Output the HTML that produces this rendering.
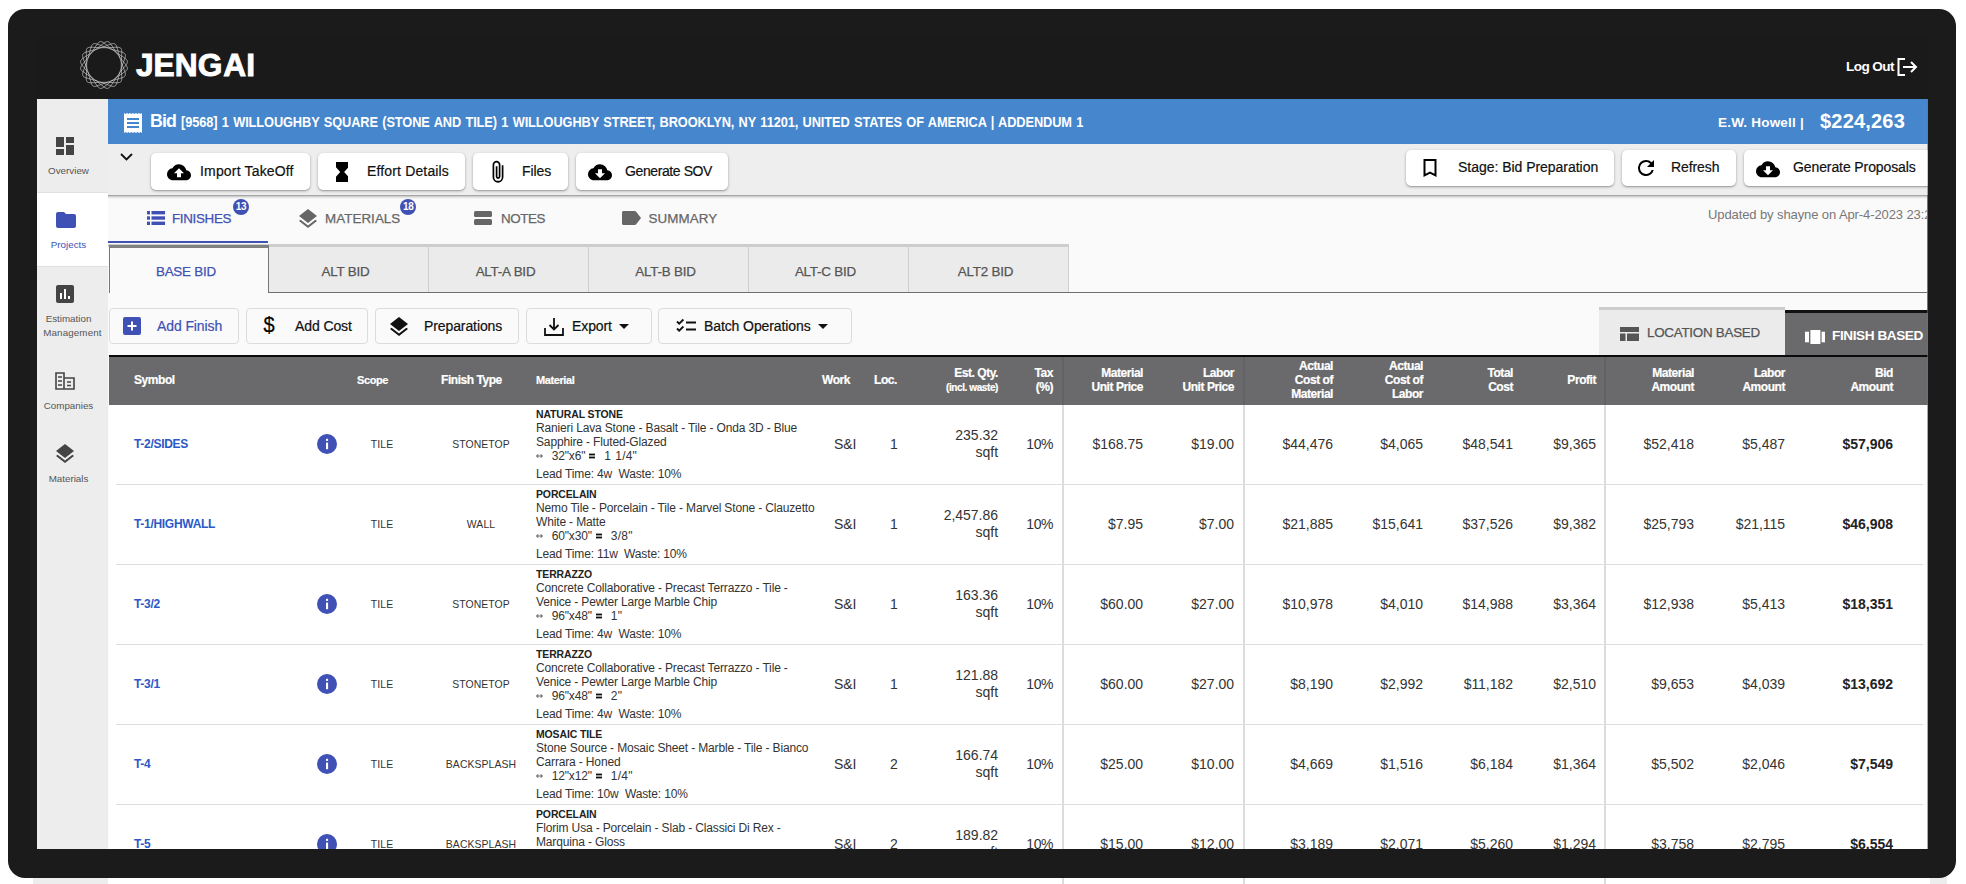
<!DOCTYPE html>
<html lang="en">
<head>
<meta charset="utf-8">
<title>JENGAI - Bid</title>
<style>
*{box-sizing:border-box;margin:0;padding:0}
html,body{width:1966px;height:884px;overflow:hidden;background:#fff}
body{position:relative;font-family:"Liberation Sans",sans-serif;color:#222}
.abs{position:absolute}
.t{position:absolute;white-space:nowrap;height:20px;line-height:20px;font-size:12px}
#frame{position:absolute;left:8px;top:9px;width:1948px;height:869px;border-radius:17px;background:#1b1b1b}
#app{position:absolute;left:0;top:0;width:1966px;height:884px;clip-path:inset(99px 38.600px 35px 37px)}
#side{position:absolute;left:37px;top:99px;width:71px;height:760px;background:#ededed}
#main{position:absolute;left:108px;top:99px;width:1830px;height:760px;background:#fafafa}
#blue{position:absolute;left:108px;top:99px;width:1830px;height:45px;background:#4686cd}
#tool{position:absolute;left:108px;top:144px;width:1830px;height:51px;background:#eeeeee}
#toolsh{position:absolute;left:108px;top:194.5px;width:1830px;height:4px;background:linear-gradient(rgba(0,0,0,.42),rgba(0,0,0,.12) 45%,rgba(0,0,0,0))}
.btn{position:absolute;background:#fff;border-radius:5px;box-shadow:0 1px 3px rgba(0,0,0,.3),0 1px 1px rgba(0,0,0,.12)}
.btn .t, .obtn .t{font-size:14px;color:#111;letter-spacing:-.1px;-webkit-text-stroke:.2px}
.obtn{position:absolute;border:1px solid #dcdcdc;border-radius:4px;background:#fafafa}
.sub{position:absolute;top:247px;height:45px;width:160px;background:#ebebeb;border-left:1px solid #cfcfcf}
.sub .t{-webkit-text-stroke:.25px;left:-3.500px;width:160px;text-align:center;top:14.700px;font-size:13.4px;color:#555;letter-spacing:-.2px}
.h{color:#fff;font-weight:bold;font-size:12px;letter-spacing:-.45px;-webkit-text-stroke:.2px #fff}
.h10{font-size:10px;letter-spacing:-.4px}
.hs{font-size:11px;letter-spacing:-.4px}
.sym{color:#2b59c8;font-weight:bold;font-size:12px;letter-spacing:-.3px}
.c12{font-size:11.5px;color:#333;letter-spacing:.1px;transform:scaleX(.905)}
.mat{font-weight:bold;font-size:11px;color:#222;letter-spacing:-.1px;transform:scaleX(.948);transform-origin:0 50%}
.d12{font-size:12px;color:#333;letter-spacing:-.15px}
.n14{font-size:14px;color:#333;letter-spacing:-.03px}
.b{font-weight:bold;color:#222}
.arr{display:inline-block;vertical-align:1px;margin-right:8.700px}
.eq{display:inline-block;vertical-align:1.500px;margin:0 9px 0 4px}
.rowline{position:absolute;left:116px;width:1807px;height:1px;background:#dedede}
.vline{position:absolute;top:405px;width:2px;height:480px;background:#dcdcdc}
.tab{color:#666;font-size:13.4px;letter-spacing:.05px;-webkit-text-stroke:.25px}
.badge{position:absolute;width:16.400px;height:16.400px;border-radius:50%;background:#3f51b5;color:#fff;font-size:10px;font-weight:bold;line-height:16.400px;text-align:center;letter-spacing:-.3px}
.sl{position:absolute;left:33px;width:71px;text-align:center;font-size:9.8px;color:#555;line-height:14px;letter-spacing:0}
</style>
</head>
<body>
<!-- bits that peek out below the frame -->
<div class="abs" style="left:33px;top:870px;width:75px;height:14px;background:#ededed"></div>
<div class="abs" style="left:1930px;top:870px;width:17px;height:14px;background:#ededed"></div>
<div class="vline" style="left:1062px"></div>
<div class="vline" style="left:1243px"></div>
<div class="vline" style="left:1604px;width:2px"></div>

<div id="frame"></div>
<div class="abs" style="left:37px;top:38px;width:1890.500px;height:61px;background:#1a1a1a"></div>

<!-- top app header -->
<svg class="abs" style="left:78px;top:38.5px" width="52" height="52" viewBox="-26 -26 52 52"><g fill="none" stroke="#e9e9e9" stroke-width="0.62"><polyline points="3.7,-23.4 4.0,-23.3 4.4,-23.2 4.7,-23.0 5.0,-22.8 5.3,-22.5 5.7,-22.2 6.0,-21.9 6.3,-21.5 6.7,-21.0 7.0,-20.5 7.4,-20.0 7.8,-19.4 8.2,-18.9 8.6,-18.2 9.0,-17.6 9.4,-16.9 9.9,-16.2 10.4,-15.5 10.8,-14.7 11.3,-14.0 11.8,-13.2 12.4,-12.5 12.9,-11.7 13.4,-10.9 14.0,-10.2 14.6,-9.4 15.1,-8.7 15.7,-7.9 16.2,-7.2 16.8,-6.5 17.4,-5.8 17.9,-5.1 18.5,-4.4 19.0,-3.8 19.5,-3.1 20.0,-2.5 20.5,-2.0 20.9,-1.4 21.3,-0.9 21.7,-0.4 22.1,0.1 22.4,0.6 22.7,1.0 22.9,1.5 23.1,1.9 23.2,2.3 23.4,2.6 23.4,3.0 23.4,3.4 23.4,3.7 23.3,4.0 23.2,4.4 23.0,4.7 22.8,5.0 22.5,5.3 22.2,5.7 21.9,6.0 21.5,6.3 21.0,6.7 20.5,7.0 20.0,7.4 19.4,7.8 18.9,8.2 18.2,8.6 17.6,9.0 16.9,9.4 16.2,9.9 15.5,10.4 14.7,10.8 14.0,11.3 13.2,11.8 12.5,12.4 11.7,12.9 10.9,13.4 10.2,14.0 9.4,14.6 8.7,15.1 7.9,15.7 7.2,16.2 6.5,16.8 5.8,17.4 5.1,17.9 4.4,18.5 3.8,19.0 3.1,19.5 2.5,20.0 2.0,20.5 1.4,20.9 0.9,21.3 0.4,21.7 -0.1,22.1 -0.6,22.4 -1.0,22.7 -1.5,22.9 -1.9,23.1 -2.3,23.2 -2.6,23.4 -3.0,23.4 -3.4,23.4 -3.7,23.4 -4.0,23.3 -4.4,23.2 -4.7,23.0 -5.0,22.8 -5.3,22.5 -5.7,22.2 -6.0,21.9 -6.3,21.5 -6.7,21.0 -7.0,20.5 -7.4,20.0 -7.8,19.4 -8.2,18.9 -8.6,18.2 -9.0,17.6 -9.4,16.9 -9.9,16.2 -10.4,15.5 -10.8,14.7 -11.3,14.0 -11.8,13.2 -12.4,12.5 -12.9,11.7 -13.4,10.9 -14.0,10.2 -14.6,9.4 -15.1,8.7 -15.7,7.9 -16.2,7.2 -16.8,6.5 -17.4,5.8 -17.9,5.1 -18.5,4.4 -19.0,3.8 -19.5,3.1 -20.0,2.5 -20.5,2.0 -20.9,1.4 -21.3,0.9 -21.7,0.4 -22.1,-0.1 -22.4,-0.6 -22.7,-1.0 -22.9,-1.5 -23.1,-1.9 -23.2,-2.3 -23.4,-2.6 -23.4,-3.0 -23.4,-3.4 -23.4,-3.7 -23.3,-4.0 -23.2,-4.4 -23.0,-4.7 -22.8,-5.0 -22.5,-5.3 -22.2,-5.7 -21.9,-6.0 -21.5,-6.3 -21.0,-6.7 -20.5,-7.0 -20.0,-7.4 -19.4,-7.8 -18.9,-8.2 -18.2,-8.6 -17.6,-9.0 -16.9,-9.4 -16.2,-9.9 -15.5,-10.4 -14.7,-10.8 -14.0,-11.3 -13.2,-11.8 -12.5,-12.4 -11.7,-12.9 -10.9,-13.4 -10.2,-14.0 -9.4,-14.6 -8.7,-15.1 -7.9,-15.7 -7.2,-16.2 -6.5,-16.8 -5.8,-17.4 -5.1,-17.9 -4.4,-18.5 -3.8,-19.0 -3.1,-19.5 -2.5,-20.0 -2.0,-20.5 -1.4,-20.9 -0.9,-21.3 -0.4,-21.7 0.1,-22.1 0.6,-22.4 1.0,-22.7 1.5,-22.9 1.9,-23.1 2.3,-23.2 2.6,-23.4 3.0,-23.4 3.4,-23.4 3.7,-23.4"/><polyline points="10.8,-21.1 11.1,-20.9 11.3,-20.7 11.6,-20.5 11.8,-20.1 12.0,-19.8 12.3,-19.4 12.5,-18.9 12.7,-18.5 12.9,-17.9 13.0,-17.3 13.2,-16.7 13.4,-16.1 13.6,-15.4 13.8,-14.7 14.0,-13.9 14.2,-13.2 14.4,-12.3 14.6,-11.5 14.9,-10.7 15.1,-9.8 15.4,-8.9 15.6,-8.0 15.9,-7.1 16.2,-6.2 16.5,-5.3 16.7,-4.4 17.1,-3.6 17.4,-2.7 17.7,-1.8 18.0,-0.9 18.3,-0.1 18.6,0.7 18.9,1.5 19.2,2.3 19.5,3.0 19.8,3.8 20.1,4.5 20.3,5.1 20.5,5.8 20.7,6.4 20.9,6.9 21.1,7.5 21.2,8.0 21.3,8.5 21.4,8.9 21.4,9.3 21.4,9.7 21.3,10.1 21.3,10.4 21.1,10.8 20.9,11.1 20.7,11.3 20.5,11.6 20.1,11.8 19.8,12.0 19.4,12.3 18.9,12.5 18.5,12.7 17.9,12.9 17.3,13.0 16.7,13.2 16.1,13.4 15.4,13.6 14.7,13.8 13.9,14.0 13.2,14.2 12.3,14.4 11.5,14.6 10.7,14.9 9.8,15.1 8.9,15.4 8.0,15.6 7.1,15.9 6.2,16.2 5.3,16.5 4.4,16.7 3.6,17.1 2.7,17.4 1.8,17.7 0.9,18.0 0.1,18.3 -0.7,18.6 -1.5,18.9 -2.3,19.2 -3.0,19.5 -3.8,19.8 -4.5,20.1 -5.1,20.3 -5.8,20.5 -6.4,20.7 -6.9,20.9 -7.5,21.1 -8.0,21.2 -8.5,21.3 -8.9,21.4 -9.3,21.4 -9.7,21.4 -10.1,21.3 -10.4,21.3 -10.8,21.1 -11.1,20.9 -11.3,20.7 -11.6,20.5 -11.8,20.1 -12.0,19.8 -12.3,19.4 -12.5,18.9 -12.7,18.5 -12.9,17.9 -13.0,17.3 -13.2,16.7 -13.4,16.1 -13.6,15.4 -13.8,14.7 -14.0,13.9 -14.2,13.2 -14.4,12.3 -14.6,11.5 -14.9,10.7 -15.1,9.8 -15.4,8.9 -15.6,8.0 -15.9,7.1 -16.2,6.2 -16.5,5.3 -16.7,4.4 -17.1,3.6 -17.4,2.7 -17.7,1.8 -18.0,0.9 -18.3,0.1 -18.6,-0.7 -18.9,-1.5 -19.2,-2.3 -19.5,-3.0 -19.8,-3.8 -20.1,-4.5 -20.3,-5.1 -20.5,-5.8 -20.7,-6.4 -20.9,-6.9 -21.1,-7.5 -21.2,-8.0 -21.3,-8.5 -21.4,-8.9 -21.4,-9.3 -21.4,-9.7 -21.3,-10.1 -21.3,-10.4 -21.1,-10.8 -20.9,-11.1 -20.7,-11.3 -20.5,-11.6 -20.1,-11.8 -19.8,-12.0 -19.4,-12.3 -18.9,-12.5 -18.5,-12.7 -17.9,-12.9 -17.3,-13.0 -16.7,-13.2 -16.1,-13.4 -15.4,-13.6 -14.7,-13.8 -13.9,-14.0 -13.2,-14.2 -12.3,-14.4 -11.5,-14.6 -10.7,-14.9 -9.8,-15.1 -8.9,-15.4 -8.0,-15.6 -7.1,-15.9 -6.2,-16.2 -5.3,-16.5 -4.4,-16.7 -3.6,-17.1 -2.7,-17.4 -1.8,-17.7 -0.9,-18.0 -0.1,-18.3 0.7,-18.6 1.5,-18.9 2.3,-19.2 3.0,-19.5 3.8,-19.8 4.5,-20.1 5.1,-20.3 5.8,-20.5 6.4,-20.7 6.9,-20.9 7.5,-21.1 8.0,-21.2 8.5,-21.3 8.9,-21.4 9.3,-21.4 9.7,-21.4 10.1,-21.3 10.4,-21.3 10.8,-21.1"/><polyline points="16.8,-16.8 17.0,-16.5 17.2,-16.2 17.3,-15.9 17.5,-15.5 17.6,-15.1 17.7,-14.6 17.7,-14.2 17.7,-13.6 17.8,-13.1 17.8,-12.5 17.8,-11.8 17.7,-11.2 17.7,-10.4 17.7,-9.7 17.6,-8.9 17.6,-8.1 17.5,-7.3 17.5,-6.4 17.4,-5.6 17.4,-4.7 17.4,-3.7 17.3,-2.8 17.3,-1.9 17.3,-0.9 17.3,-0.0 17.3,0.9 17.3,1.9 17.3,2.8 17.4,3.7 17.4,4.7 17.4,5.6 17.5,6.4 17.5,7.3 17.6,8.1 17.6,8.9 17.7,9.7 17.7,10.4 17.7,11.2 17.8,11.8 17.8,12.5 17.8,13.1 17.7,13.6 17.7,14.2 17.7,14.6 17.6,15.1 17.5,15.5 17.3,15.9 17.2,16.2 17.0,16.5 16.8,16.8 16.5,17.0 16.2,17.2 15.9,17.3 15.5,17.5 15.1,17.6 14.6,17.7 14.2,17.7 13.6,17.7 13.1,17.8 12.5,17.8 11.8,17.8 11.2,17.7 10.4,17.7 9.7,17.7 8.9,17.6 8.1,17.6 7.3,17.5 6.4,17.5 5.6,17.4 4.7,17.4 3.7,17.4 2.8,17.3 1.9,17.3 0.9,17.3 0.0,17.3 -0.9,17.3 -1.9,17.3 -2.8,17.3 -3.7,17.4 -4.7,17.4 -5.6,17.4 -6.4,17.5 -7.3,17.5 -8.1,17.6 -8.9,17.6 -9.7,17.7 -10.4,17.7 -11.2,17.7 -11.8,17.8 -12.5,17.8 -13.1,17.8 -13.6,17.7 -14.2,17.7 -14.6,17.7 -15.1,17.6 -15.5,17.5 -15.9,17.3 -16.2,17.2 -16.5,17.0 -16.8,16.8 -17.0,16.5 -17.2,16.2 -17.3,15.9 -17.5,15.5 -17.6,15.1 -17.7,14.6 -17.7,14.2 -17.7,13.6 -17.8,13.1 -17.8,12.5 -17.8,11.8 -17.7,11.2 -17.7,10.4 -17.7,9.7 -17.6,8.9 -17.6,8.1 -17.5,7.3 -17.5,6.4 -17.4,5.6 -17.4,4.7 -17.4,3.7 -17.3,2.8 -17.3,1.9 -17.3,0.9 -17.3,0.0 -17.3,-0.9 -17.3,-1.9 -17.3,-2.8 -17.4,-3.7 -17.4,-4.7 -17.4,-5.6 -17.5,-6.4 -17.5,-7.3 -17.6,-8.1 -17.6,-8.9 -17.7,-9.7 -17.7,-10.4 -17.7,-11.2 -17.8,-11.8 -17.8,-12.5 -17.8,-13.1 -17.7,-13.6 -17.7,-14.2 -17.7,-14.6 -17.6,-15.1 -17.5,-15.5 -17.3,-15.9 -17.2,-16.2 -17.0,-16.5 -16.8,-16.8 -16.5,-17.0 -16.2,-17.2 -15.9,-17.3 -15.5,-17.5 -15.1,-17.6 -14.6,-17.7 -14.2,-17.7 -13.6,-17.7 -13.1,-17.8 -12.5,-17.8 -11.8,-17.8 -11.2,-17.7 -10.4,-17.7 -9.7,-17.7 -8.9,-17.6 -8.1,-17.6 -7.3,-17.5 -6.4,-17.5 -5.6,-17.4 -4.7,-17.4 -3.7,-17.4 -2.8,-17.3 -1.9,-17.3 -0.9,-17.3 -0.0,-17.3 0.9,-17.3 1.9,-17.3 2.8,-17.3 3.7,-17.4 4.7,-17.4 5.6,-17.4 6.4,-17.5 7.3,-17.5 8.1,-17.6 8.9,-17.6 9.7,-17.7 10.4,-17.7 11.2,-17.7 11.8,-17.8 12.5,-17.8 13.1,-17.8 13.6,-17.7 14.2,-17.7 14.6,-17.7 15.1,-17.6 15.5,-17.5 15.9,-17.3 16.2,-17.2 16.5,-17.0 16.8,-16.8"/><polyline points="21.1,-10.8 21.3,-10.4 21.3,-10.1 21.4,-9.7 21.4,-9.3 21.4,-8.9 21.3,-8.5 21.2,-8.0 21.1,-7.5 20.9,-6.9 20.7,-6.4 20.5,-5.8 20.3,-5.1 20.1,-4.5 19.8,-3.8 19.5,-3.0 19.2,-2.3 18.9,-1.5 18.6,-0.7 18.3,0.1 18.0,0.9 17.7,1.8 17.4,2.7 17.1,3.6 16.7,4.4 16.5,5.3 16.2,6.2 15.9,7.1 15.6,8.0 15.4,8.9 15.1,9.8 14.9,10.7 14.6,11.5 14.4,12.3 14.2,13.2 14.0,13.9 13.8,14.7 13.6,15.4 13.4,16.1 13.2,16.7 13.0,17.3 12.9,17.9 12.7,18.5 12.5,18.9 12.3,19.4 12.0,19.8 11.8,20.1 11.6,20.5 11.3,20.7 11.1,20.9 10.8,21.1 10.4,21.3 10.1,21.3 9.7,21.4 9.3,21.4 8.9,21.4 8.5,21.3 8.0,21.2 7.5,21.1 6.9,20.9 6.4,20.7 5.8,20.5 5.1,20.3 4.5,20.1 3.8,19.8 3.0,19.5 2.3,19.2 1.5,18.9 0.7,18.6 -0.1,18.3 -0.9,18.0 -1.8,17.7 -2.7,17.4 -3.6,17.1 -4.4,16.7 -5.3,16.5 -6.2,16.2 -7.1,15.9 -8.0,15.6 -8.9,15.4 -9.8,15.1 -10.7,14.9 -11.5,14.6 -12.3,14.4 -13.2,14.2 -13.9,14.0 -14.7,13.8 -15.4,13.6 -16.1,13.4 -16.7,13.2 -17.3,13.0 -17.9,12.9 -18.5,12.7 -18.9,12.5 -19.4,12.3 -19.8,12.0 -20.1,11.8 -20.5,11.6 -20.7,11.3 -20.9,11.1 -21.1,10.8 -21.3,10.4 -21.3,10.1 -21.4,9.7 -21.4,9.3 -21.4,8.9 -21.3,8.5 -21.2,8.0 -21.1,7.5 -20.9,6.9 -20.7,6.4 -20.5,5.8 -20.3,5.1 -20.1,4.5 -19.8,3.8 -19.5,3.0 -19.2,2.3 -18.9,1.5 -18.6,0.7 -18.3,-0.1 -18.0,-0.9 -17.7,-1.8 -17.4,-2.7 -17.1,-3.6 -16.7,-4.4 -16.5,-5.3 -16.2,-6.2 -15.9,-7.1 -15.6,-8.0 -15.4,-8.9 -15.1,-9.8 -14.9,-10.7 -14.6,-11.5 -14.4,-12.3 -14.2,-13.2 -14.0,-13.9 -13.8,-14.7 -13.6,-15.4 -13.4,-16.1 -13.2,-16.7 -13.0,-17.3 -12.9,-17.9 -12.7,-18.5 -12.5,-18.9 -12.3,-19.4 -12.0,-19.8 -11.8,-20.1 -11.6,-20.5 -11.3,-20.7 -11.1,-20.9 -10.8,-21.1 -10.4,-21.3 -10.1,-21.3 -9.7,-21.4 -9.3,-21.4 -8.9,-21.4 -8.5,-21.3 -8.0,-21.2 -7.5,-21.1 -6.9,-20.9 -6.4,-20.7 -5.8,-20.5 -5.1,-20.3 -4.5,-20.1 -3.8,-19.8 -3.0,-19.5 -2.3,-19.2 -1.5,-18.9 -0.7,-18.6 0.1,-18.3 0.9,-18.0 1.8,-17.7 2.7,-17.4 3.6,-17.1 4.4,-16.7 5.3,-16.5 6.2,-16.2 7.1,-15.9 8.0,-15.6 8.9,-15.4 9.8,-15.1 10.7,-14.9 11.5,-14.6 12.3,-14.4 13.2,-14.2 13.9,-14.0 14.7,-13.8 15.4,-13.6 16.1,-13.4 16.7,-13.2 17.3,-13.0 17.9,-12.9 18.5,-12.7 18.9,-12.5 19.4,-12.3 19.8,-12.0 20.1,-11.8 20.5,-11.6 20.7,-11.3 20.9,-11.1 21.1,-10.8"/><polyline points="23.4,-3.7 23.4,-3.4 23.4,-3.0 23.4,-2.6 23.2,-2.3 23.1,-1.9 22.9,-1.5 22.7,-1.0 22.4,-0.6 22.1,-0.1 21.7,0.4 21.3,0.9 20.9,1.4 20.5,2.0 20.0,2.5 19.5,3.1 19.0,3.8 18.5,4.4 17.9,5.1 17.4,5.8 16.8,6.5 16.2,7.2 15.7,7.9 15.1,8.7 14.6,9.4 14.0,10.2 13.4,10.9 12.9,11.7 12.4,12.5 11.8,13.2 11.3,14.0 10.8,14.7 10.4,15.5 9.9,16.2 9.4,16.9 9.0,17.6 8.6,18.2 8.2,18.9 7.8,19.4 7.4,20.0 7.0,20.5 6.7,21.0 6.3,21.5 6.0,21.9 5.7,22.2 5.3,22.5 5.0,22.8 4.7,23.0 4.4,23.2 4.0,23.3 3.7,23.4 3.4,23.4 3.0,23.4 2.6,23.4 2.3,23.2 1.9,23.1 1.5,22.9 1.0,22.7 0.6,22.4 0.1,22.1 -0.4,21.7 -0.9,21.3 -1.4,20.9 -2.0,20.5 -2.5,20.0 -3.1,19.5 -3.8,19.0 -4.4,18.5 -5.1,17.9 -5.8,17.4 -6.5,16.8 -7.2,16.2 -7.9,15.7 -8.7,15.1 -9.4,14.6 -10.2,14.0 -10.9,13.4 -11.7,12.9 -12.5,12.4 -13.2,11.8 -14.0,11.3 -14.7,10.8 -15.5,10.4 -16.2,9.9 -16.9,9.4 -17.6,9.0 -18.2,8.6 -18.9,8.2 -19.4,7.8 -20.0,7.4 -20.5,7.0 -21.0,6.7 -21.5,6.3 -21.9,6.0 -22.2,5.7 -22.5,5.3 -22.8,5.0 -23.0,4.7 -23.2,4.4 -23.3,4.0 -23.4,3.7 -23.4,3.4 -23.4,3.0 -23.4,2.6 -23.2,2.3 -23.1,1.9 -22.9,1.5 -22.7,1.0 -22.4,0.6 -22.1,0.1 -21.7,-0.4 -21.3,-0.9 -20.9,-1.4 -20.5,-2.0 -20.0,-2.5 -19.5,-3.1 -19.0,-3.8 -18.5,-4.4 -17.9,-5.1 -17.4,-5.8 -16.8,-6.5 -16.2,-7.2 -15.7,-7.9 -15.1,-8.7 -14.6,-9.4 -14.0,-10.2 -13.4,-10.9 -12.9,-11.7 -12.4,-12.5 -11.8,-13.2 -11.3,-14.0 -10.8,-14.7 -10.4,-15.5 -9.9,-16.2 -9.4,-16.9 -9.0,-17.6 -8.6,-18.2 -8.2,-18.9 -7.8,-19.4 -7.4,-20.0 -7.0,-20.5 -6.7,-21.0 -6.3,-21.5 -6.0,-21.9 -5.7,-22.2 -5.3,-22.5 -5.0,-22.8 -4.7,-23.0 -4.4,-23.2 -4.0,-23.3 -3.7,-23.4 -3.4,-23.4 -3.0,-23.4 -2.6,-23.4 -2.3,-23.2 -1.9,-23.1 -1.5,-22.9 -1.0,-22.7 -0.6,-22.4 -0.1,-22.1 0.4,-21.7 0.9,-21.3 1.4,-20.9 2.0,-20.5 2.5,-20.0 3.1,-19.5 3.8,-19.0 4.4,-18.5 5.1,-17.9 5.8,-17.4 6.5,-16.8 7.2,-16.2 7.9,-15.7 8.7,-15.1 9.4,-14.6 10.2,-14.0 10.9,-13.4 11.7,-12.9 12.5,-12.4 13.2,-11.8 14.0,-11.3 14.7,-10.8 15.5,-10.4 16.2,-9.9 16.9,-9.4 17.6,-9.0 18.2,-8.6 18.9,-8.2 19.4,-7.8 20.0,-7.4 20.5,-7.0 21.0,-6.7 21.5,-6.3 21.9,-6.0 22.2,-5.7 22.5,-5.3 22.8,-5.0 23.0,-4.7 23.2,-4.4 23.3,-4.0 23.4,-3.7"/></g></svg>
<div class="t" style="left:136px;top:43px;height:44px;line-height:44px;font-size:31.7px;font-weight:bold;color:#fff;-webkit-text-stroke:.9px #fff">JENG<span style="margin-left:1px">AI</span></div>
<div class="t" style="left:1846px;top:57px;font-size:13.6px;font-weight:bold;color:#fff;letter-spacing:-.6px">Log Out</div>
<svg class="abs" style="left:1896px;top:56px" width="22" height="22" viewBox="0 0 22 22" fill="none" stroke="#fff" stroke-width="2"><path d="M9 3H2.5v16H9"/><path d="M7 11h13M15 6l5 5-5 5"/></svg>

<div id="app">
<div id="main"></div>
<div id="side"></div>

<!-- sidebar -->
<svg class="abs" style="left:56px;top:137px" width="18" height="18" viewBox="0 0 18 18" fill="#444"><rect x="0" y="0" width="8" height="10"/><rect x="10" y="0" width="8" height="6"/><rect x="0" y="12" width="8" height="6"/><rect x="10" y="8" width="8" height="10"/></svg>
<div class="sl" style="top:163.600px">Overview</div>
<div class="abs" style="left:37px;top:192px;width:71px;height:75px;background:#fff;border-top:1px solid #e0e0e0;border-bottom:1px solid #e0e0e0"></div>
<svg class="abs" style="left:56px;top:212px" width="20" height="16" viewBox="0 0 20 16" fill="#3f51b5"><path d="M2 0h6l2 2h8a2 2 0 0 1 2 2v10a2 2 0 0 1-2 2H2a2 2 0 0 1-2-2V2a2 2 0 0 1 2-2z"/></svg>
<div class="sl" style="top:237.700px;color:#3f51b5">Projects</div>
<svg class="abs" style="left:56px;top:285px" width="18" height="18" viewBox="0 0 18 18"><rect width="18" height="18" rx="2" fill="#444"/><rect x="4" y="8" width="2" height="6" fill="#fff"/><rect x="8" y="4" width="2" height="10" fill="#fff"/><rect x="12" y="11" width="2" height="3" fill="#fff"/></svg>
<div class="sl" style="top:311.800px">Estimation<br><span style="display:block;text-align:left;margin-left:10.200px;letter-spacing:.13px;white-space:nowrap">Management</span></div>
<svg class="abs" style="left:55px;top:372px" width="20" height="18" viewBox="0 0 20 18" fill="none" stroke="#444" stroke-width="1.6"><path d="M1 1h8v16H1zM9 6h10v11H9"/><path d="M3 5h4M3 9h4M3 13h4M12 10h4M12 13.5h4" stroke-width="1.4"/></svg>
<div class="sl" style="top:398.900px">Companies</div>
<svg class="abs" style="left:55px;top:443px" width="20" height="20" viewBox="0 0 20 20" fill="#444"><path d="M10 1l9 7-9 7-9-7z"/><path d="M10 17.5l-7.4-5.7L1 13l9 7 9-7-1.6-1.2z"/></svg>
<div class="sl" style="top:471.900px">Materials</div>

<!-- blue bid bar -->
<div id="blue"></div>
<svg class="abs" style="left:124px;top:113px" width="18" height="20" viewBox="0 0 18 20"><path d="M0 0l1.5 1L3 0l1.5 1L6 0l1.5 1L9 0l1.5 1L12 0l1.5 1L15 0l1.5 1L18 0v20l-1.5-1L15 20l-1.5-1L12 20l-1.5-1L9 20l-1.5-1L6 20l-1.5-1L3 20l-1.5-1L0 20z" fill="#fff"/><path d="M3 6h12M3 10h12M3 14h12" stroke="#4686cd" stroke-width="1.8"/></svg>
<div class="t" style="left:150px;top:111px;font-size:17.8px;font-weight:bold;color:#fff;letter-spacing:-.9px">Bid</div>
<div class="t" style="left:181px;top:112px;font-size:14px;font-weight:bold;color:#fff;letter-spacing:-.1px;word-spacing:1px;transform:scaleX(.913);transform-origin:0 50%">[9568] 1 WILLOUGHBY SQUARE (STONE AND TILE) 1 WILLOUGHBY STREET, BROOKLYN, NY 11201, UNITED STATES OF AMERICA | ADDENDUM 1</div>
<div class="t" style="left:1718px;top:113px;font-size:13.5px;font-weight:bold;color:#fff;letter-spacing:.2px">E.W. Howell |</div>
<div class="t" style="left:1820px;top:111px;font-size:20px;font-weight:bold;color:#fff;letter-spacing:.2px">$224,263</div>

<!-- toolbar -->
<div id="tool"></div><div id="toolsh"></div>
<svg class="abs" style="left:120px;top:152px" width="13" height="10" viewBox="0 0 13 10" fill="none" stroke="#111" stroke-width="1.8"><path d="M1 2l5.5 5.5L12 2"/></svg>

<div class="btn" style="left:151px;top:153px;width:159px;height:37px">
 <svg class="abs" style="left:16px;top:11px" width="24" height="16.500" viewBox="0 0 24 16"><path d="M19.35 6.04A7.49 7.49 0 0 0 12 0C9.11 0 6.6 1.64 5.35 4.04A5.994 5.994 0 0 0 0 10c0 3.31 2.69 6 6 6h13c2.76 0 5-2.24 5-5 0-2.64-2.05-4.78-4.65-4.96zM14 9v4h-4V9H7l5-5 5 5h-3z" fill="#000"/></svg>
 <div class="t" style="left:49px;top:8px;letter-spacing:.17px">Import TakeOff</div>
</div>
<div class="btn" style="left:318px;top:153px;width:147px;height:37px">
 <svg class="abs" style="left:18px;top:9px" width="12.400" height="20" viewBox="0 0 14 20" preserveAspectRatio="none"><path d="M0 0h14v5.2L9.2 10 14 14.8V20H0v-5.2L4.8 10 0 5.200z" fill="#000"/></svg>
 <div class="t" style="left:49px;top:8px;letter-spacing:.15px">Effort Details</div>
</div>
<div class="btn" style="left:473px;top:153px;width:95px;height:37px">
 <svg class="abs" style="left:18.500px;top:7px" width="12" height="23" viewBox="0 0 12 22" preserveAspectRatio="none" fill="none" stroke="#000" stroke-width="1.7"><path d="M10.600 5v11.2a4.600 4.600 0 0 1-9.200 0V4.600a3.100 3.100 0 0 1 6.200 0v11.200a1.500 1.500 0 0 1-3 0V6"/></svg>
 <div class="t" style="left:49px;top:8px">Files</div>
</div>
<div class="btn" style="left:576px;top:153px;width:152px;height:37px">
 <svg class="abs" style="left:12px;top:11px" width="24" height="16.500" viewBox="0 0 24 16"><path d="M19.35 6.04A7.49 7.49 0 0 0 12 0C9.11 0 6.600 1.640 5.350 4.040A5.994 5.994 0 0 0 0 10c0 3.310 2.690 6 6 6h13c2.760 0 5-2.240 5-5 0-2.640-2.050-4.780-4.650-4.960zM17 9l-5 5-5-5h3V5h4v4h3z" fill="#000"/></svg>
 <div class="t" style="left:49px;top:8px;letter-spacing:-.4px">Generate SOV</div>
</div>

<div class="btn" style="left:1406px;top:150px;width:208px;height:36px">
 <svg class="abs" style="left:17px;top:9px" width="14" height="18" viewBox="0 0 14 18" fill="none" stroke="#000" stroke-width="2"><path d="M1.500 1h11v15.300L7 13.700 1.500 16.300z"/></svg>
 <div class="t" style="left:52px;top:7px;letter-spacing:-.03px">Stage: Bid Preparation</div>
</div>
<div class="btn" style="left:1622px;top:150px;width:114px;height:36px">
 <svg class="abs" style="left:15px;top:9px" width="18" height="18" viewBox="0 0 18 18"><path d="M14.650 3.350A7.950 7.950 0 0 0 9 1a8 8 0 1 0 7.730 10h-2.080A6 6 0 1 1 9 3c1.660 0 3.140.69 4.220 1.780L10 8h7V1l-2.350 2.350z" fill="#000"/></svg>
 <div class="t" style="left:49px;top:7px">Refresh</div>
</div>
<div class="btn" style="left:1744px;top:150px;width:200px;height:36px">
 <svg class="abs" style="left:12px;top:11px" width="24" height="16.500" viewBox="0 0 24 16"><path d="M19.35 6.04A7.49 7.49 0 0 0 12 0C9.11 0 6.600 1.640 5.350 4.040A5.994 5.994 0 0 0 0 10c0 3.310 2.690 6 6 6h13c2.760 0 5-2.240 5-5 0-2.640-2.050-4.780-4.650-4.960zM17 9l-5 5-5-5h3V5h4v4h3z" fill="#000"/></svg>
 <div class="t" style="left:49px;top:7px">Generate Proposals</div>
</div>

<!-- main tabs -->
<svg class="abs" style="left:147px;top:211px" width="18" height="14" viewBox="0 0 18 14" fill="#3f51b5"><rect x="0" y="0" width="3" height="3.400"/><rect x="4.500" y="0" width="13.500" height="3.400"/><rect x="0" y="5.300" width="3" height="3.400"/><rect x="4.500" y="5.300" width="13.500" height="3.400"/><rect x="0" y="10.600" width="3" height="3.400"/><rect x="4.500" y="10.600" width="13.500" height="3.400"/></svg>
<div class="t tab" style="left:172px;top:209px;color:#3f51b5;letter-spacing:-.32px">FINISHES</div>
<div class="badge" style="left:232.800px;top:198.900px">13</div>
<svg class="abs" style="left:298px;top:208px" width="20" height="20" viewBox="0 0 20 20" fill="#666"><path d="M10 1l9 7-9 7-9-7z"/><path d="M10 17.500l-7.400-5.700L1 13l9 7 9-7-1.600-1.200z"/></svg>
<div class="t tab" style="left:325px;top:209px">MATERIALS</div>
<div class="badge" style="left:400px;top:199px">18</div>
<svg class="abs" style="left:474px;top:211px" width="18" height="14" viewBox="0 0 18 14" fill="#666"><rect x="0" y="0" width="18" height="6" rx="1.500"/><rect x="0" y="8" width="18" height="6" rx="1.500"/></svg>
<div class="t tab" style="left:501px;top:209px;letter-spacing:-.4px">NOTES</div>
<svg class="abs" style="left:622px;top:211px" width="19" height="14" viewBox="0 0 19 14" fill="#666"><path d="M1.500 0h11.200c.6 0 1.100.3 1.500.7L19 7l-4.800 6.300c-.4.400-.9.700-1.500.7H1.500C.7 14 0 13.300 0 12.500v-11C0 .7.700 0 1.500 0z"/></svg>
<div class="t tab" style="left:648.5px;top:209px;letter-spacing:.07px">SUMMARY</div>
<div class="abs" style="left:108px;top:241px;width:160px;height:2px;background:#3f51b5"></div>
<div class="t" style="left:1708px;top:205px;font-size:13px;color:#777;letter-spacing:-.1px">Updated by shayne on Apr-4-2023 23:24</div>

<!-- bid sub-tabs -->
<div class="abs" style="left:108px;top:244px;width:961px;height:3px;background:#cdcdcd"></div>
<div class="sub" style="left:268px"><div class="t">ALT BID</div></div>
<div class="sub" style="left:428px"><div class="t">ALT-A BID</div></div>
<div class="sub" style="left:588px"><div class="t">ALT-B BID</div></div>
<div class="sub" style="left:748px"><div class="t">ALT-C BID</div></div>
<div class="sub" style="left:908px;width:161px;border-right:1px solid #cfcfcf"><div class="t">ALT2 BID</div></div>
<div class="abs" style="left:268px;top:292px;width:1700px;height:1px;background:#6e6e6e"></div>
<div class="abs" style="left:109px;top:245px;width:160px;height:48px;border:1px solid #777;border-top:3px solid #808080;border-bottom:none;background:#fafafa"></div>
<div class="t" style="left:106px;width:160px;text-align:center;top:261.900px;font-size:13.4px;letter-spacing:-.2px;-webkit-text-stroke:.25px;color:#3f51b5">BASE BID</div>

<!-- action buttons -->
<div class="obtn" style="left:109px;top:308px;width:130px;height:36px">
 <svg class="abs" style="left:13px;top:8px" width="18" height="18" viewBox="0 0 18 18"><rect width="18" height="18" rx="2" fill="#3f51b5"/><path d="M9 4.500v9M4.500 9h9" stroke="#fff" stroke-width="2"/></svg>
 <div class="t" style="left:47px;top:7px;color:#3f51b5">Add Finish</div>
</div>
<div class="obtn" style="left:246px;top:308px;width:122px;height:36px">
 <div class="t" style="left:16px;top:6px;font-size:21.500px;color:#000;transform:scaleX(.93)">$</div>
 <div class="t" style="left:48px;top:7px">Add Cost</div>
</div>
<div class="obtn" style="left:375px;top:308px;width:144px;height:36px">
 <svg class="abs" style="left:13px;top:7px" width="20" height="20" viewBox="0 0 20 20" fill="#111"><path d="M10 1l9 7-9 7-9-7z"/><path d="M10 17.500l-7.400-5.700L1 13l9 7 9-7-1.600-1.200z"/></svg>
 <div class="t" style="left:48px;top:7px">Preparations</div>
</div>
<div class="obtn" style="left:526px;top:308px;width:126px;height:36px">
 <svg class="abs" style="left:17px;top:8px" width="20" height="19" viewBox="0 0 20 19" fill="none" stroke="#111" stroke-width="1.800"><path d="M1 11v7h18v-7"/><path d="M10 1v11M5.500 8l4.500 4.500L14.500 8"/></svg>
 <div class="t" style="left:45px;top:7px">Export</div>
 <div class="abs" style="left:92px;top:15px;border-left:5px solid transparent;border-right:5px solid transparent;border-top:5px solid #111"></div>
</div>
<div class="obtn" style="left:658px;top:308px;width:194px;height:36px">
 <svg class="abs" style="left:17px;top:9px" width="21" height="16" viewBox="0 0 21 16" fill="none" stroke="#111" stroke-width="1.800"><path d="M1 3.500l2.200 2.200L7.400 1.500M1 10.500l2.200 2.200 4.200-4.200M10 4.500h10M10 11.500h10"/></svg>
 <div class="t" style="left:45px;top:7px">Batch Operations</div>
 <div class="abs" style="left:159px;top:15px;border-left:5px solid transparent;border-right:5px solid transparent;border-top:5px solid #111"></div>
</div>

<!-- view toggle -->
<div class="abs" style="left:1599px;top:307px;width:186px;height:48px;background:#ebebeb;border-top:3px solid #cdcdcd"></div>
<svg class="abs" style="left:1620px;top:327px" width="19" height="14" viewBox="0 0 19 14" fill="#555"><rect x="0" y="0" width="19" height="5"/><rect x="0" y="6.500" width="5.500" height="7.500"/><rect x="7" y="6.500" width="12" height="7.500"/></svg>
<div class="t" style="left:1647px;top:323px;font-size:13.4px;color:#555;letter-spacing:-.26px;-webkit-text-stroke:.25px">LOCATION BASED</div>
<div class="abs" style="left:1785px;top:310px;width:160px;height:45px;background:#6a6a6c;border-top:3px solid #111"></div>
<svg class="abs" style="left:1804.800px;top:329.500px" width="20.600" height="14" viewBox="0 0 20.600 14" fill="#fff"><rect x="0" y="1.700" width="4" height="10.600"/><rect x="5.400" y="0" width="10" height="14" rx=".6"/><rect x="16.600" y="1.700" width="4" height="10.600"/></svg>
<div class="t" style="left:1832px;top:326px;font-size:13.6px;color:#fff;font-weight:bold;letter-spacing:-.42px">FINISH BASED</div>

<!-- table -->
<div class="abs" style="left:109px;top:355px;width:1830px;height:2px;background:#0a0a0a"></div>
<div class="abs" style="left:109px;top:357px;width:1830px;height:48px;background:#6a6a6c"></div>
<div class="abs" style="left:109px;top:405px;width:1830px;height:460px;background:#fff"></div>
<div class="abs" style="left:1062px;top:357px;width:2px;height:48px;background:#626264"></div>
<div class="abs" style="left:1243px;top:357px;width:2px;height:48px;background:#626264"></div>
<div class="abs" style="left:1604px;top:357px;width:2px;height:48px;background:#626264"></div>
<div class="vline" style="left:1062px"></div>
<div class="vline" style="left:1243px"></div>
<div class="vline" style="left:1604px;width:2px"></div>
<div class="t h" style="left:134px;top:370px;">Symbol</div>
<div class="t h hs" style="left:357px;top:370px;">Scope</div>
<div class="t h" style="left:441px;top:370px;">Finish Type</div>
<div class="t h hs" style="left:536px;top:370px;">Material</div>
<div class="t h" style="left:822px;top:370px;">Work</div>
<div class="t h" style="left:874px;top:370px;">Loc.</div>
<div class="t h" style="right:968px;top:363px;">Est. Qty.</div>
<div class="t h h10" style="right:968px;top:378px;">(incl. waste)</div>
<div class="t h" style="right:913px;top:363px;">Tax</div>
<div class="t h" style="right:913px;top:377px;">(%)</div>
<div class="t h" style="right:823px;top:363px;">Material</div>
<div class="t h" style="right:823px;top:377px;">Unit Price</div>
<div class="t h" style="right:732px;top:363px;">Labor</div>
<div class="t h" style="right:732px;top:377px;">Unit Price</div>
<div class="t h" style="right:633px;top:356px;">Actual</div>
<div class="t h" style="right:633px;top:370px;">Cost of</div>
<div class="t h" style="right:633px;top:384px;">Material</div>
<div class="t h" style="right:543px;top:356px;">Actual</div>
<div class="t h" style="right:543px;top:370px;">Cost of</div>
<div class="t h" style="right:543px;top:384px;">Labor</div>
<div class="t h" style="right:453px;top:363px;">Total</div>
<div class="t h" style="right:453px;top:377px;">Cost</div>
<div class="t h" style="right:370px;top:370px;">Profit</div>
<div class="t h" style="right:272px;top:363px;">Material</div>
<div class="t h" style="right:272px;top:377px;">Amount</div>
<div class="t h" style="right:181px;top:363px;">Labor</div>
<div class="t h" style="right:181px;top:377px;">Amount</div>
<div class="t h" style="right:73px;top:363px;">Bid</div>
<div class="t h" style="right:73px;top:377px;">Amount</div>
<div class="rowline" style="top:484px"></div>
<div class="t sym" style="left:134px;top:434px;">T-2/SIDES</div>
<svg class="abs" style="left:316.8px;top:434px" width="20" height="20" viewBox="0 0 20 20"><circle cx="10" cy="10" r="10" fill="#3f51b5"/><rect x="9" y="8.6" width="2.1" height="6.6" fill="#fff"/><rect x="9" y="4.8" width="2.1" height="2.1" fill="#fff"/></svg>
<div class="t c12" style="left:232px;width:300px;text-align:center;top:434px;">TILE</div>
<div class="t c12" style="left:331px;width:300px;text-align:center;top:434px;">STONETOP</div>
<div class="t mat" style="left:536px;top:404px;">NATURAL STONE</div>
<div class="t d12" style="left:536px;top:418px;">Ranieri Lava Stone - Basalt - Tile - Onda 3D - Blue</div>
<div class="t d12" style="left:536px;top:432px;">Sapphire - Fluted-Glazed</div>
<div class="t d12" style="left:536px;top:446px"><svg class="arr" width="7" height="6" viewBox="0 0 7 6" fill="none" stroke="#444" stroke-width=".9"><path d="M.7 3h5.600M2.200 1.200L.6 3l1.600 1.800M4.800 1.200L6.400 3 4.800 4.800"/></svg><span>32"x6"</span><svg class="eq" width="6" height="6" viewBox="0 0 6 6"><rect y=".6" width="6" height="1.800" fill="#111"/><rect y="3.600" width="6" height="1.800" fill="#111"/></svg><span style="word-spacing:.5px;letter-spacing:.2px">1 1/4"</span></div>
<div class="t d12" style="left:536px;top:464px;">Lead Time: 4w&nbsp; Waste: 10%</div>
<div class="t n14" style="left:834px;top:434px;">S&amp;I</div>
<div class="t n14" style="left:744px;width:300px;text-align:center;top:434px;">1</div>
<div class="t n14" style="right:968px;top:425px;">235.32</div>
<div class="t n14" style="right:968px;top:442px;">sqft</div>
<div class="t n14" style="right:913px;top:434px;letter-spacing:-.45px">10%</div>
<div class="t n14" style="right:823px;top:434px;">$168.75</div>
<div class="t n14" style="right:732px;top:434px;">$19.00</div>
<div class="t n14" style="right:633px;top:434px;">$44,476</div>
<div class="t n14" style="right:543px;top:434px;">$4,065</div>
<div class="t n14" style="right:453px;top:434px;">$48,541</div>
<div class="t n14" style="right:370px;top:434px;">$9,365</div>
<div class="t n14" style="right:272px;top:434px;">$52,418</div>
<div class="t n14" style="right:181px;top:434px;">$5,487</div>
<div class="t n14 b" style="right:73px;top:434px;">$57,906</div>
<div class="rowline" style="top:564px"></div>
<div class="t sym" style="left:134px;top:514px;">T-1/HIGHWALL</div>
<div class="t c12" style="left:232px;width:300px;text-align:center;top:514px;">TILE</div>
<div class="t c12" style="left:331px;width:300px;text-align:center;top:514px;">WALL</div>
<div class="t mat" style="left:536px;top:484px;">PORCELAIN</div>
<div class="t d12" style="left:536px;top:498px;">Nemo Tile - Porcelain - Tile - Marvel Stone - Clauzetto</div>
<div class="t d12" style="left:536px;top:512px;">White - Matte</div>
<div class="t d12" style="left:536px;top:526px"><svg class="arr" width="7" height="6" viewBox="0 0 7 6" fill="none" stroke="#444" stroke-width=".9"><path d="M.7 3h5.600M2.200 1.200L.6 3l1.600 1.800M4.800 1.200L6.400 3 4.800 4.800"/></svg><span>60"x30"</span><svg class="eq" width="6" height="6" viewBox="0 0 6 6"><rect y=".6" width="6" height="1.800" fill="#111"/><rect y="3.600" width="6" height="1.800" fill="#111"/></svg><span style="word-spacing:.5px;letter-spacing:.2px">3/8"</span></div>
<div class="t d12" style="left:536px;top:544px;">Lead Time: 11w&nbsp; Waste: 10%</div>
<div class="t n14" style="left:834px;top:514px;">S&amp;I</div>
<div class="t n14" style="left:744px;width:300px;text-align:center;top:514px;">1</div>
<div class="t n14" style="right:968px;top:505px;">2,457.86</div>
<div class="t n14" style="right:968px;top:522px;">sqft</div>
<div class="t n14" style="right:913px;top:514px;letter-spacing:-.45px">10%</div>
<div class="t n14" style="right:823px;top:514px;">$7.95</div>
<div class="t n14" style="right:732px;top:514px;">$7.00</div>
<div class="t n14" style="right:633px;top:514px;">$21,885</div>
<div class="t n14" style="right:543px;top:514px;">$15,641</div>
<div class="t n14" style="right:453px;top:514px;">$37,526</div>
<div class="t n14" style="right:370px;top:514px;">$9,382</div>
<div class="t n14" style="right:272px;top:514px;">$25,793</div>
<div class="t n14" style="right:181px;top:514px;">$21,115</div>
<div class="t n14 b" style="right:73px;top:514px;">$46,908</div>
<div class="rowline" style="top:644px"></div>
<div class="t sym" style="left:134px;top:594px;">T-3/2</div>
<svg class="abs" style="left:316.8px;top:594px" width="20" height="20" viewBox="0 0 20 20"><circle cx="10" cy="10" r="10" fill="#3f51b5"/><rect x="9" y="8.6" width="2.1" height="6.6" fill="#fff"/><rect x="9" y="4.8" width="2.1" height="2.1" fill="#fff"/></svg>
<div class="t c12" style="left:232px;width:300px;text-align:center;top:594px;">TILE</div>
<div class="t c12" style="left:331px;width:300px;text-align:center;top:594px;">STONETOP</div>
<div class="t mat" style="left:536px;top:564px;">TERRAZZO</div>
<div class="t d12" style="left:536px;top:578px;">Concrete Collaborative - Precast Terrazzo - Tile -</div>
<div class="t d12" style="left:536px;top:592px;">Venice - Pewter Large Marble Chip</div>
<div class="t d12" style="left:536px;top:606px"><svg class="arr" width="7" height="6" viewBox="0 0 7 6" fill="none" stroke="#444" stroke-width=".9"><path d="M.7 3h5.600M2.200 1.200L.6 3l1.600 1.800M4.800 1.200L6.400 3 4.800 4.800"/></svg><span>96"x48"</span><svg class="eq" width="6" height="6" viewBox="0 0 6 6"><rect y=".6" width="6" height="1.800" fill="#111"/><rect y="3.600" width="6" height="1.800" fill="#111"/></svg><span style="word-spacing:.5px;letter-spacing:.2px">1"</span></div>
<div class="t d12" style="left:536px;top:624px;">Lead Time: 4w&nbsp; Waste: 10%</div>
<div class="t n14" style="left:834px;top:594px;">S&amp;I</div>
<div class="t n14" style="left:744px;width:300px;text-align:center;top:594px;">1</div>
<div class="t n14" style="right:968px;top:585px;">163.36</div>
<div class="t n14" style="right:968px;top:602px;">sqft</div>
<div class="t n14" style="right:913px;top:594px;letter-spacing:-.45px">10%</div>
<div class="t n14" style="right:823px;top:594px;">$60.00</div>
<div class="t n14" style="right:732px;top:594px;">$27.00</div>
<div class="t n14" style="right:633px;top:594px;">$10,978</div>
<div class="t n14" style="right:543px;top:594px;">$4,010</div>
<div class="t n14" style="right:453px;top:594px;">$14,988</div>
<div class="t n14" style="right:370px;top:594px;">$3,364</div>
<div class="t n14" style="right:272px;top:594px;">$12,938</div>
<div class="t n14" style="right:181px;top:594px;">$5,413</div>
<div class="t n14 b" style="right:73px;top:594px;">$18,351</div>
<div class="rowline" style="top:724px"></div>
<div class="t sym" style="left:134px;top:674px;">T-3/1</div>
<svg class="abs" style="left:316.8px;top:674px" width="20" height="20" viewBox="0 0 20 20"><circle cx="10" cy="10" r="10" fill="#3f51b5"/><rect x="9" y="8.6" width="2.1" height="6.6" fill="#fff"/><rect x="9" y="4.8" width="2.1" height="2.1" fill="#fff"/></svg>
<div class="t c12" style="left:232px;width:300px;text-align:center;top:674px;">TILE</div>
<div class="t c12" style="left:331px;width:300px;text-align:center;top:674px;">STONETOP</div>
<div class="t mat" style="left:536px;top:644px;">TERRAZZO</div>
<div class="t d12" style="left:536px;top:658px;">Concrete Collaborative - Precast Terrazzo - Tile -</div>
<div class="t d12" style="left:536px;top:672px;">Venice - Pewter Large Marble Chip</div>
<div class="t d12" style="left:536px;top:686px"><svg class="arr" width="7" height="6" viewBox="0 0 7 6" fill="none" stroke="#444" stroke-width=".9"><path d="M.7 3h5.600M2.200 1.200L.6 3l1.600 1.800M4.800 1.200L6.400 3 4.800 4.800"/></svg><span>96"x48"</span><svg class="eq" width="6" height="6" viewBox="0 0 6 6"><rect y=".6" width="6" height="1.800" fill="#111"/><rect y="3.600" width="6" height="1.800" fill="#111"/></svg><span style="word-spacing:.5px;letter-spacing:.2px">2"</span></div>
<div class="t d12" style="left:536px;top:704px;">Lead Time: 4w&nbsp; Waste: 10%</div>
<div class="t n14" style="left:834px;top:674px;">S&amp;I</div>
<div class="t n14" style="left:744px;width:300px;text-align:center;top:674px;">1</div>
<div class="t n14" style="right:968px;top:665px;">121.88</div>
<div class="t n14" style="right:968px;top:682px;">sqft</div>
<div class="t n14" style="right:913px;top:674px;letter-spacing:-.45px">10%</div>
<div class="t n14" style="right:823px;top:674px;">$60.00</div>
<div class="t n14" style="right:732px;top:674px;">$27.00</div>
<div class="t n14" style="right:633px;top:674px;">$8,190</div>
<div class="t n14" style="right:543px;top:674px;">$2,992</div>
<div class="t n14" style="right:453px;top:674px;">$11,182</div>
<div class="t n14" style="right:370px;top:674px;">$2,510</div>
<div class="t n14" style="right:272px;top:674px;">$9,653</div>
<div class="t n14" style="right:181px;top:674px;">$4,039</div>
<div class="t n14 b" style="right:73px;top:674px;">$13,692</div>
<div class="rowline" style="top:804px"></div>
<div class="t sym" style="left:134px;top:754px;">T-4</div>
<svg class="abs" style="left:316.8px;top:754px" width="20" height="20" viewBox="0 0 20 20"><circle cx="10" cy="10" r="10" fill="#3f51b5"/><rect x="9" y="8.6" width="2.1" height="6.6" fill="#fff"/><rect x="9" y="4.8" width="2.1" height="2.1" fill="#fff"/></svg>
<div class="t c12" style="left:232px;width:300px;text-align:center;top:754px;">TILE</div>
<div class="t c12" style="left:331px;width:300px;text-align:center;top:754px;">BACKSPLASH</div>
<div class="t mat" style="left:536px;top:724px;">MOSAIC TILE</div>
<div class="t d12" style="left:536px;top:738px;">Stone Source - Mosaic Sheet - Marble - Tile - Bianco</div>
<div class="t d12" style="left:536px;top:752px;">Carrara - Honed</div>
<div class="t d12" style="left:536px;top:766px"><svg class="arr" width="7" height="6" viewBox="0 0 7 6" fill="none" stroke="#444" stroke-width=".9"><path d="M.7 3h5.600M2.200 1.200L.6 3l1.600 1.800M4.800 1.200L6.400 3 4.800 4.800"/></svg><span>12"x12"</span><svg class="eq" width="6" height="6" viewBox="0 0 6 6"><rect y=".6" width="6" height="1.800" fill="#111"/><rect y="3.600" width="6" height="1.800" fill="#111"/></svg><span style="word-spacing:.5px;letter-spacing:.2px">1/4"</span></div>
<div class="t d12" style="left:536px;top:784px;">Lead Time: 10w&nbsp; Waste: 10%</div>
<div class="t n14" style="left:834px;top:754px;">S&amp;I</div>
<div class="t n14" style="left:744px;width:300px;text-align:center;top:754px;">2</div>
<div class="t n14" style="right:968px;top:745px;">166.74</div>
<div class="t n14" style="right:968px;top:762px;">sqft</div>
<div class="t n14" style="right:913px;top:754px;letter-spacing:-.45px">10%</div>
<div class="t n14" style="right:823px;top:754px;">$25.00</div>
<div class="t n14" style="right:732px;top:754px;">$10.00</div>
<div class="t n14" style="right:633px;top:754px;">$4,669</div>
<div class="t n14" style="right:543px;top:754px;">$1,516</div>
<div class="t n14" style="right:453px;top:754px;">$6,184</div>
<div class="t n14" style="right:370px;top:754px;">$1,364</div>
<div class="t n14" style="right:272px;top:754px;">$5,502</div>
<div class="t n14" style="right:181px;top:754px;">$2,046</div>
<div class="t n14 b" style="right:73px;top:754px;">$7,549</div>
<div class="rowline" style="top:884px"></div>
<div class="t sym" style="left:134px;top:834px;">T-5</div>
<svg class="abs" style="left:316.8px;top:834px" width="20" height="20" viewBox="0 0 20 20"><circle cx="10" cy="10" r="10" fill="#3f51b5"/><rect x="9" y="8.6" width="2.1" height="6.6" fill="#fff"/><rect x="9" y="4.8" width="2.1" height="2.1" fill="#fff"/></svg>
<div class="t c12" style="left:232px;width:300px;text-align:center;top:834px;">TILE</div>
<div class="t c12" style="left:331px;width:300px;text-align:center;top:834px;">BACKSPLASH</div>
<div class="t mat" style="left:536px;top:804px;">PORCELAIN</div>
<div class="t d12" style="left:536px;top:818px;">Florim Usa - Porcelain - Slab - Classici Di Rex -</div>
<div class="t d12" style="left:536px;top:832px;">Marquina - Gloss</div>
<div class="t d12" style="left:536px;top:846px"><svg class="arr" width="7" height="6" viewBox="0 0 7 6" fill="none" stroke="#444" stroke-width=".9"><path d="M.7 3h5.600M2.200 1.200L.6 3l1.600 1.800M4.800 1.200L6.400 3 4.800 4.800"/></svg><span>48"x96"</span><svg class="eq" width="6" height="6" viewBox="0 0 6 6"><rect y=".6" width="6" height="1.800" fill="#111"/><rect y="3.600" width="6" height="1.800" fill="#111"/></svg><span style="word-spacing:.5px;letter-spacing:.2px">1/2"</span></div>
<div class="t d12" style="left:536px;top:864px;">Lead Time: 8w&nbsp; Waste: 10%</div>
<div class="t n14" style="left:834px;top:834px;">S&amp;I</div>
<div class="t n14" style="left:744px;width:300px;text-align:center;top:834px;">2</div>
<div class="t n14" style="right:968px;top:825px;">189.82</div>
<div class="t n14" style="right:968px;top:842px;">sqft</div>
<div class="t n14" style="right:913px;top:834px;letter-spacing:-.45px">10%</div>
<div class="t n14" style="right:823px;top:834px;">$15.00</div>
<div class="t n14" style="right:732px;top:834px;">$12.00</div>
<div class="t n14" style="right:633px;top:834px;">$3,189</div>
<div class="t n14" style="right:543px;top:834px;">$2,071</div>
<div class="t n14" style="right:453px;top:834px;">$5,260</div>
<div class="t n14" style="right:370px;top:834px;">$1,294</div>
<div class="t n14" style="right:272px;top:834px;">$3,758</div>
<div class="t n14" style="right:181px;top:834px;">$2,795</div>
<div class="t n14 b" style="right:73px;top:834px;">$6,554</div>
</div>
</body>
</html>
